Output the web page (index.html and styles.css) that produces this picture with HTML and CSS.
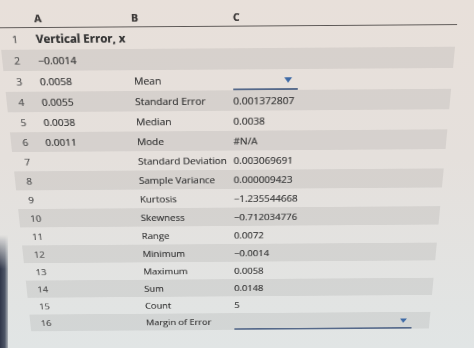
FILE: index.html
```html
<!DOCTYPE html>
<html>
<head>
<meta charset="utf-8">
<link rel="stylesheet" href="styles.css">
</head>
<body>
<div class="screen">
  <div class="sheet">
    <div class="head"><span></span><span>A</span><span>B</span><span>C</span></div>
    <div class="row"><span class="n">1</span><span class="title">Vertical Error, x</span><span></span><span></span></div>
    <div class="row alt"><span class="n">2</span><span>−0.0014</span><span></span><span></span></div>
    <div class="row"><span class="n">3</span><span>0.0058</span><span>Mean</span><span><span class="dd short"><i class="tri"></i></span></span></div>
    <div class="row alt"><span class="n">4</span><span>0.0055</span><span>Standard Error</span><span>0.001372807</span></div>
    <div class="row"><span class="n">5</span><span>0.0038</span><span>Median</span><span>0.0038</span></div>
    <div class="row alt"><span class="n">6</span><span>0.0011</span><span>Mode</span><span>#N/A</span></div>
    <div class="row"><span class="n">7</span><span></span><span>Standard Deviation</span><span>0.003069691</span></div>
    <div class="row alt"><span class="n">8</span><span></span><span>Sample Variance</span><span>0.000009423</span></div>
    <div class="row"><span class="n">9</span><span></span><span>Kurtosis</span><span>−1.235544668</span></div>
    <div class="row alt"><span class="n">10</span><span></span><span>Skewness</span><span>−0.712034776</span></div>
    <div class="row"><span class="n">11</span><span></span><span>Range</span><span>0.0072</span></div>
    <div class="row alt"><span class="n">12</span><span></span><span>Minimum</span><span>−0.0014</span></div>
    <div class="row"><span class="n">13</span><span></span><span>Maximum</span><span>0.0058</span></div>
    <div class="row alt"><span class="n">14</span><span></span><span>Sum</span><span>0.0148</span></div>
    <div class="row"><span class="n">15</span><span></span><span>Count</span><span>5</span></div>
    <div class="row alt"><span class="n">16</span><span></span><span>Margin of Error</span><span><span class="dd long"><i class="tri"></i></span></span></div>
  </div>
  <div class="bezel"></div>
</div>
</body>
</html>
```
FILE: styles.css
```css
html, body {
  margin: 0;
  padding: 0;
}
body {
  width: 474px;
  height: 348px;
  overflow: hidden;
  font-family: "Open Sans", "Liberation Sans", sans-serif;
  color: #3b3b3b;
}
.screen {
  position: relative;
  width: 474px;
  height: 348px;
  padding-top: 6px;
  box-sizing: border-box;
  background: linear-gradient(180deg, #e8e0da 0%, #e5e0dc 45%, #e1e5e5 100%);
}
.sheet {
  width: 456px;
  transform-origin: 228px 32px;
  transform: perspective(831px) rotateZ(-0.4deg) rotateX(-20deg);
  text-shadow: 0 0 0.5px rgba(40, 40, 40, 0.6);
}
.head {
  display: grid;
  grid-template-columns: 36px 96px 101px 1fr;
  height: 19px;
  align-items: center;
  border-bottom: 1px solid #5a5654;
  font-weight: 700;
  font-size: 10.5px;
  color: #3a3736;
}
.row {
  display: grid;
  grid-template-columns: 36px 96px 101px 1fr;
  height: 23px;
  align-items: center;
  font-size: 10.5px;
  white-space: nowrap;
}
.row.alt {
  background: rgba(90, 90, 90, 0.11);
}
.n {
  padding-left: 12px;
  color: #5a5a5a;
}
.title {
  font-weight: 700;
  font-size: 11.5px;
  color: #333;
}
.dd {
  position: relative;
  display: block;
  height: 16px;
  border-bottom: 2px solid #55698a;
  margin-top: 4px;
}
.dd.short { width: 66px; }
.dd.long { width: 203px; }
.tri {
  position: absolute;
  right: 6px;
  top: 4px;
  width: 0;
  height: 0;
  border-left: 4.5px solid transparent;
  border-right: 4.5px solid transparent;
  border-top: 6px solid #3e6aa6;
}
.bezel {
  position: absolute;
  left: 0;
  top: 235px;
  bottom: 0;
  width: 8px;
  background: linear-gradient(90deg, #2f3649 0%, #4d5566 60%, #aeb3b8 100%);
  -webkit-mask-image: linear-gradient(180deg, transparent 0%, #000 30%);
  mask-image: linear-gradient(180deg, transparent 0%, #000 30%);
}
```
